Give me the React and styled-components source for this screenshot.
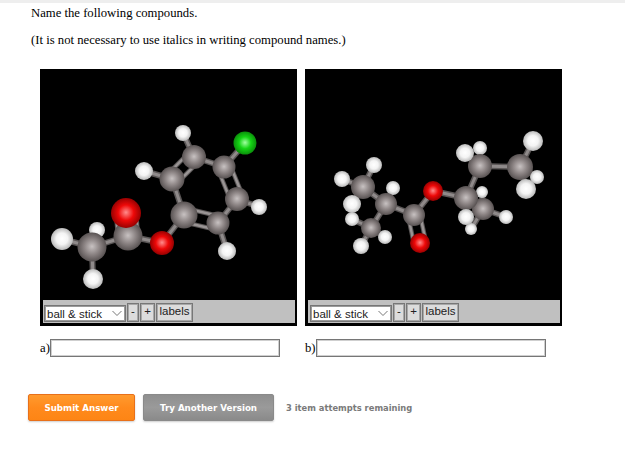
import React from 'react';
import styled, { createGlobalStyle } from 'styled-components';

const GlobalStyle = createGlobalStyle`
  html, body {
    margin: 0;
    padding: 0;
    background: #fff;
  }
`;

const Page = styled.div`
  width: 625px;
  height: 465px;
  overflow: hidden;
  border-top: 3px solid #eeeeee;
  box-sizing: border-box;
  font-family: 'Liberation Serif', 'Times New Roman', serif;
  color: #000;
`;

const Prompt = styled.p`
  margin: ${(p) => p.$top}px 0 0 31px;
  font-size: 12.7px;
  line-height: 14px;
`;

const Grid = styled.div`
  display: grid;
  grid-template-columns: 257px 257px;
  column-gap: 8px;
  margin: 22px 0 0 40px;
`;

const Viewer = styled.div`
  display: flex;
  flex-direction: column;
  height: 257px;
  background: #000;
  padding: 0 2px 3px 3px;
  box-sizing: border-box;
`;

const Scene = styled.svg`
  display: block;
  width: 252px;
  height: 231px;
  flex: none;
`;

const ControlBar = styled.div`
  display: flex;
  align-items: flex-end;
  gap: 1px;
  height: 23px;
  padding: 0 0 1px ${(p) => p.$inset}px;
  box-sizing: border-box;
  background: #c0c0c0;
  font-family: 'Liberation Sans', Arial, sans-serif;
  font-size: 11.5px;
  color: #222;
`;

const SelectBox = styled.div`
  position: relative;
  width: 82px;
  height: 17px;
`;

const Select = styled.select`
  appearance: none;
  display: block;
  width: 100%;
  height: 100%;
  margin: 0;
  padding: 0 0 0 2px;
  box-sizing: border-box;
  border: 1px solid #767676;
  outline: 1px solid #9a9a9a;
  outline-offset: -2px;
  border-radius: 0;
  background: #fff;
  font: inherit;
  color: inherit;
`;

const Chevron = styled.svg`
  position: absolute;
  right: 4px;
  top: 5px;
  width: 10px;
  height: 7px;
`;

const ViewerButton = styled.button`
  height: 19px;
  margin: 0;
  padding: 0 2px 2px;
  box-sizing: border-box;
  border: 1px solid #777;
  outline: 1px solid #a8a8a8;
  outline-offset: -2px;
  border-radius: 0;
  background: #dcdcdc;
  font: inherit;
  line-height: 13px;
  color: inherit;
  min-width: ${(p) => p.$width}px;
`;

const Field = styled.label`
  display: flex;
  align-items: center;
  margin-top: 13px;
  font-size: 12.7px;
  height: 18px;
`;

const AnswerInput = styled.input`
  display: block;
  width: 230px;
  height: 18px;
  margin: 0;
  padding: 0 2px;
  box-sizing: border-box;
  border: 1px solid #767676;
  outline: 1px solid #cfcfcf;
  outline-offset: -2px;
  border-radius: 0;
  background: #fff;
`;

const Actions = styled.div`
  display: flex;
  align-items: center;
  margin: 37px 0 0 28px;
  font-family: 'DejaVu Sans', Verdana, sans-serif;
  font-size: 8.7px;
  font-weight: 700;
`;

const ActionButton = styled.button`
  width: ${(p) => p.$width}px;
  height: 27px;
  margin: 0 8px 0 0;
  padding: 0;
  box-sizing: border-box;
  border: 1px solid ${(p) => (p.$primary ? '#e8701a' : '#8a8a8a')};
  border-radius: 2px;
  background: ${(p) =>
    p.$primary
      ? 'linear-gradient(#ff9a2e, #ff8a1c 50%, #fd8515)'
      : 'linear-gradient(#8f8f8f, #9a9a9a 50%, #8a8a8a)'};
  box-shadow: 0 1px 2px rgba(0, 0, 0, 0.2);
  color: #fff;
  font: inherit;
`;

const Attempts = styled.span`
  margin-left: 4px;
  font-size: 8.35px;
  color: #7a7a7a;
`;

const COLORS = { C: 'carbon', H: 'hydrogen', O: 'oxygen', Cl: 'chlorine' };

const molecules = [
  {
    bonds: [
      [183, 133, 194, 157], [245, 143, 224, 167], [194, 157, 224, 167],
      [144, 171, 172, 179], [237, 199, 259, 207], [172, 179, 184, 215],
      [218, 223, 227, 251], [184, 215, 162, 243], [162, 243, 128, 236],
      [128, 236, 92, 247], [62, 239, 92, 247], [92, 247, 93, 279],
      [92, 247, 97, 230], [237, 199, 218, 223],
    ],
    // last value is half the gap between the two sticks
    doubles: [
      [194, 157, 172, 179, 6.5], [224, 167, 237, 199, 6.5], [184, 215, 218, 223, 7],
      [126, 213, 128, 236, 10],
    ],
    atoms: [
      ['H', 97, 230, 8], ['H', 183, 133, 8], ['Cl', 245, 143, 11.5], ['C', 194, 157, 12],
      ['C', 224, 167, 11.5], ['H', 144, 171, 9], ['C', 172, 179, 12.5], ['H', 259, 207, 8],
      ['C', 237, 199, 12], ['C', 218, 223, 11.5], ['C', 184, 215, 13.5], ['H', 62, 239, 11],
      ['H', 93, 279, 10], ['C', 92, 247, 14.5], ['C', 128, 236, 14.5], ['O', 126, 213, 15],
      ['O', 162, 243, 12], ['H', 227, 251, 9],
    ],
  },
  {
    bonds: [
      [533, 141, 520, 167], [480, 166, 520, 167], [465, 153, 480, 166], [480, 148, 480, 166],
      [520, 167, 537, 177], [520, 167, 526, 189], [480, 166, 466, 198], [433, 191, 466, 198],
      [466, 198, 483, 209], [483, 209, 506, 217], [466, 198, 466, 217], [483, 209, 482, 192],
      [483, 209, 471, 229], [374, 165, 363, 187], [342, 179, 363, 187], [363, 187, 386, 204],
      [363, 187, 352, 204], [393, 188, 386, 204], [386, 204, 414, 215], [386, 204, 371, 228],
      [352, 219, 371, 228], [371, 228, 385, 237], [371, 228, 361, 246], [414, 215, 433, 191],
    ],
    doubles: [[414, 215, 420, 243, 6]],
    atoms: [
      ['H', 480, 148, 7], ['H', 537, 177, 7], ['H', 533, 141, 10], ['C', 480, 166, 12],
      ['H', 465, 153, 9], ['C', 520, 167, 13], ['H', 526, 189, 10], ['H', 374, 165, 8],
      ['H', 342, 179, 8], ['C', 363, 187, 12], ['H', 393, 188, 7], ['H', 482, 192, 6],
      ['H', 471, 229, 6], ['C', 483, 209, 11], ['C', 466, 198, 12], ['O', 433, 191, 10],
      ['H', 506, 217, 7], ['H', 466, 217, 8], ['H', 352, 204, 9], ['C', 386, 204, 11],
      ['C', 414, 215, 11], ['H', 352, 219, 7], ['H', 385, 237, 7], ['C', 371, 228, 10],
      ['O', 420, 243, 10], ['H', 361, 246, 8],
    ],
  },
];

function Gradients({ id }) {
  const stops = {
    carbon: ['#c8c2c2', '#8e8686', '#544e4e'],
    hydrogen: ['#ffffff', '#f4f4f4', '#b4b4b4'],
    oxygen: ['#ff8c8c', '#ee0808', '#900000'],
    chlorine: ['#a0ffa0', '#14d414', '#0a8a0a'],
  };

  return (
    <defs>
      {Object.entries(stops).map(([name, [light, mid, dark]]) => (
        <radialGradient key={name} id={`${id}-${name}`} cx="0.5" cy="0.5" r="0.52" fx="0.5" fy="0.48">
          <stop offset="0" stopColor={light} />
          <stop offset="0.5" stopColor={mid} />
          <stop offset="1" stopColor={dark} />
        </radialGradient>
      ))}
    </defs>
  );
}

function Bond({ line }) {
  const [x1, y1, x2, y2] = line;
  return (
    <g>
      <line x1={x1} y1={y1} x2={x2} y2={y2} stroke="#5a5656" strokeWidth="6" />
      <line x1={x1} y1={y1} x2={x2} y2={y2} stroke="#8f8a8a" strokeWidth="3" />
    </g>
  );
}

function DoubleBond({ line }) {
  const [x1, y1, x2, y2, gap] = line;
  const len = Math.hypot(x2 - x1, y2 - y1);
  const ox = (-(y2 - y1) / len) * gap;
  const oy = ((x2 - x1) / len) * gap;
  return (
    <g>
      {[1, -1].map((side) => (
        <g key={side}>
          <line
            x1={x1 + side * ox}
            y1={y1 + side * oy}
            x2={x2 + side * ox}
            y2={y2 + side * oy}
            stroke="#5a5656"
            strokeWidth="4.5"
          />
          <line
            x1={x1 + side * ox}
            y1={y1 + side * oy}
            x2={x2 + side * ox}
            y2={y2 + side * oy}
            stroke="#999494"
            strokeWidth="2.5"
          />
        </g>
      ))}
    </g>
  );
}

function Molecule({ id, originX, data }) {
  return (
    <Scene viewBox={`${originX} 69 252 231`}>
      <Gradients id={id} />
      {data.bonds.map((line) => (
        <Bond key={line.join()} line={line} />
      ))}
      {data.doubles.map((line) => (
        <DoubleBond key={line.join()} line={line} />
      ))}
      {data.atoms.map(([el, cx, cy, r]) => (
        <circle key={`${cx}-${cy}`} cx={cx} cy={cy} r={r} fill={`url(#${id}-${COLORS[el]})`} />
      ))}
    </Scene>
  );
}

function MoleculeViewer({ id, originX, inset, data }) {
  return (
    <Viewer>
      <Molecule id={id} originX={originX} data={data} />
      <ControlBar $inset={inset}>
        <SelectBox>
          <Select defaultValue="ball">
            <option value="ball">ball &amp; stick</option>
            <option value="wire">wireframe</option>
          </Select>
          <Chevron viewBox="0 0 10 7">
            <path d="M0.5 1 L5 5.5 L9.5 1" fill="none" stroke="#777" strokeWidth="1" />
          </Chevron>
        </SelectBox>
        <ViewerButton $width={12}>-</ViewerButton>
        <ViewerButton $width={15}>+</ViewerButton>
        <ViewerButton $width={37}>labels</ViewerButton>
      </ControlBar>
    </Viewer>
  );
}

export default function App() {
  return (
    <Page>
      <GlobalStyle />
      <Prompt $top={3}>Name the following compounds.</Prompt>
      <Prompt $top={13}>(It is not necessary to use italics in writing compound names.)</Prompt>
      <Grid>
        <MoleculeViewer id="first" originX={43} inset={1} data={molecules[0]} />
        <MoleculeViewer id="second" originX={308} inset={2} data={molecules[1]} />
        <Field>
          a)
          <AnswerInput type="text" />
        </Field>
        <Field>
          b)
          <AnswerInput type="text" />
        </Field>
      </Grid>
      <Actions>
        <ActionButton $primary $width={107}>Submit Answer</ActionButton>
        <ActionButton $width={131}>Try Another Version</ActionButton>
        <Attempts>3 item attempts remaining</Attempts>
      </Actions>
    </Page>
  );
}
